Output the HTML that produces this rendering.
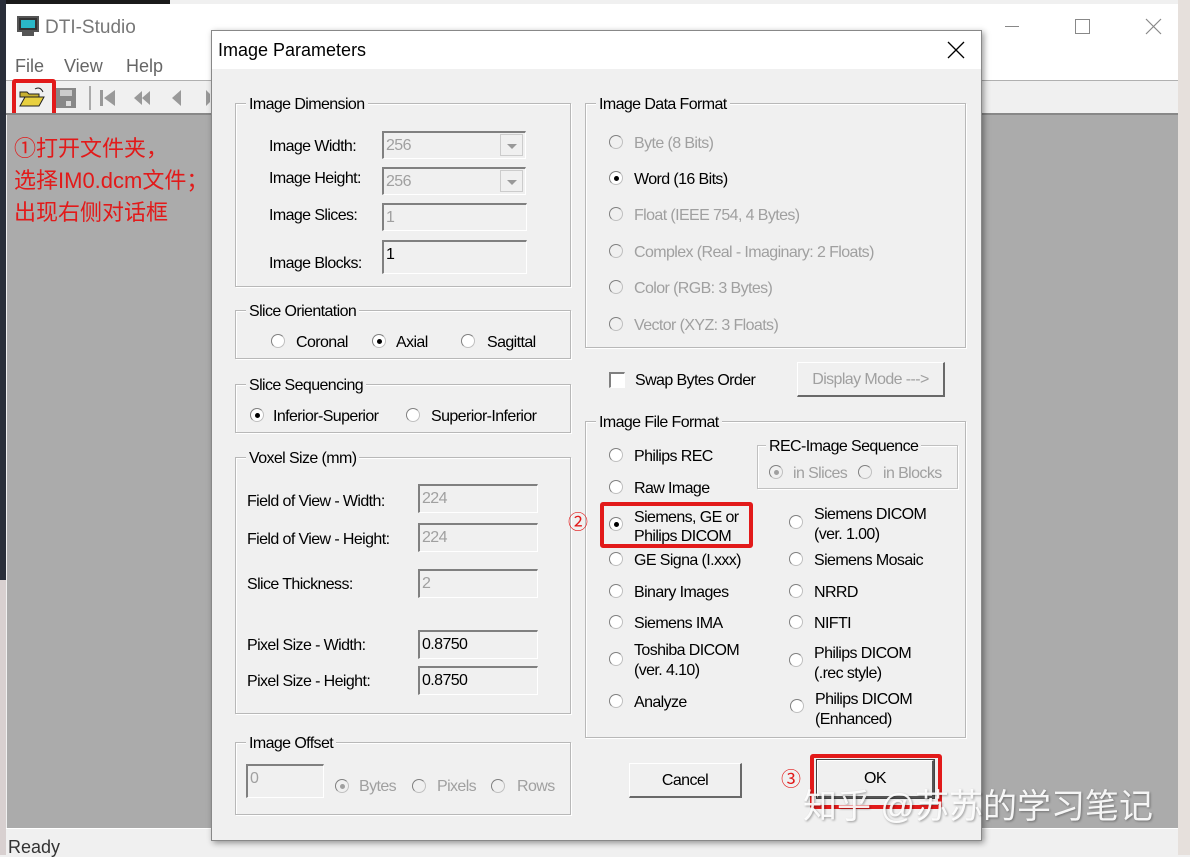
<!DOCTYPE html>
<html><head><meta charset="utf-8"><style>
*{margin:0;padding:0;box-sizing:border-box}
body{width:1190px;height:855px;overflow:hidden;position:relative;background:#f0f0f0;font-family:"Liberation Sans","Noto Sans CJK SC",sans-serif}
.a{position:absolute}
.t{position:absolute;font-size:16px;line-height:20px;white-space:nowrap;color:#000;letter-spacing:-0.6px;margin-top:2px}
.g{color:#a0a0a0}
.gb{position:absolute;border:1px solid #b8b8b8;box-shadow:1px 1px 0 #fff inset,1px 1px 0 #fff}
.gl{position:absolute;top:-9px;left:10px;background:#f0f0f0;padding:0 3px;font-size:16px;line-height:20px;letter-spacing:-0.6px;white-space:nowrap}
.r{position:absolute;width:14px;height:14px;border-radius:50%;background:#fff;border:1px solid #c0c0c0;border-top-color:#808080;border-left-color:#808080;margin-top:1px}
.r.d{background:#f0f0f0}
.r.c::after{content:"";position:absolute;left:3.5px;top:3.5px;width:5px;height:5px;border-radius:50%;background:#000}
.r.d.c::after{background:#a0a0a0}
.e{position:absolute;background:#f0f0f0;border:1px solid #fff;border-top:2px solid #808080;border-left:2px solid #808080;font-size:16px;line-height:20px;padding-left:2px;padding-top:3px;letter-spacing:-0.6px}
.btn{position:absolute;background:#f0f0f0;border:1px solid #fff;border-right:2px solid #696969;border-bottom:2px solid #696969;text-align:center;font-size:16px;letter-spacing:-0.6px}
.red{position:absolute;border:3px solid #e21a1a;border-radius:3px}
.rt{position:absolute;color:#e21a1a;font-size:22px;line-height:32px;white-space:nowrap}
</style></head><body>
<div class="a" style="left:0;top:0;width:170px;height:4px;background:#1a1a1a"></div>
<div class="a" style="left:0;top:0;width:6px;height:580px;background:#2a2f3a"></div>
<div class="a" style="left:0;top:580px;width:6px;height:275px;background:#d8d0d0"></div>
<div class="a" style="left:6px;top:4px;width:1172px;height:76px;background:#fff"></div>
<div class="a" style="left:1178px;top:0;width:12px;height:855px;background:#e6e0dc"></div>
<div class="a" style="left:17px;top:16px;width:22px;height:16px;background:#333;border:2px solid #555"><div class="a" style="left:2px;top:2px;width:14px;height:8px;background:#2ab8c8"></div></div>
<div class="a" style="left:22px;top:32px;width:12px;height:4px;background:#555"></div>
<div class="t" style="left:45px;top:16px;font-size:19px;color:#777;letter-spacing:0">DTI-Studio</div>
<div class="a" style="left:1005px;top:26px;width:14px;height:1px;background:#888"></div>
<div class="a" style="left:1075px;top:19px;width:15px;height:15px;border:1px solid #888"></div>
<svg class="a" style="left:1145px;top:18px" width="17" height="17"><path d="M1 1L16 16M16 1L1 16" stroke="#888" stroke-width="1.2"/></svg>
<div class="t" style="left:15px;top:54px;font-size:18px;color:#666;letter-spacing:0">File</div>
<div class="t" style="left:64px;top:54px;font-size:18px;color:#666;letter-spacing:0">View</div>
<div class="t" style="left:126px;top:54px;font-size:18px;color:#666;letter-spacing:0">Help</div>
<div class="a" style="left:6px;top:80px;width:1172px;height:1px;background:#b0b0b0"></div>
<div class="a" style="left:6px;top:81px;width:1172px;height:32px;background:#f0f0f0"></div>
<svg class="a" style="left:18px;top:86px" width="28" height="22"><path d="M2 6h7l2 2h10v3H2z" fill="#c8b030" stroke="#222"/><path d="M2 20l5-9h19l-5 9z" fill="#e8d040" stroke="#222"/><path d="M17 3q5-3 8 3" stroke="#222" fill="none"/></svg>
<div class="a" style="left:56px;top:88px;width:20px;height:20px;background:#888"><div class="a" style="left:4px;top:2px;width:12px;height:6px;background:#ccc"></div><div class="a" style="left:10px;top:13px;width:5px;height:5px;background:#ddd"></div></div>
<div class="a" style="left:89px;top:86px;width:2px;height:24px;background:#aaa"></div>
<svg class="a" style="left:100px;top:88px" width="110" height="20" fill="#999"><rect x="0" y="2" width="3" height="16"/><path d="M4 10l11-8v16z"/><path d="M34 10l8-7v14zM42 10l8-7v14z"/><path d="M72 10l9-8v16z"/><path d="M106 2l4 4v8l-4 4z"/></svg>
<div class="red" style="left:12px;top:79px;width:44px;height:42px;border-width:4px"></div>
<div class="a" style="left:6px;top:113px;width:1172px;height:2px;background:#888"></div>
<div class="a" style="left:7px;top:115px;width:1171px;height:713px;background:#ababab"></div>
<div class="a" style="left:6px;top:828px;width:1172px;height:27px;background:#f0f0f0;border-top:1px solid #fff"></div>
<div class="t" style="left:8px;top:835px;font-size:18px;color:#333;letter-spacing:0">Ready</div>
<div class="rt" style="left:14px;top:133px">①打开文件夹，</div>
<div class="rt" style="left:14px;top:165px">选择IM0.dcm文件；</div>
<div class="rt" style="left:14px;top:197px">出现右侧对话框</div>
<div class="a" style="left:211px;top:30px;width:771px;height:811px;background:#f0f0f0;border:1px solid #888;box-shadow:2px 2px 6px rgba(0,0,0,.4)"></div>
<div class="a" style="left:212px;top:31px;width:769px;height:38px;background:#fff"></div>
<div class="t" style="left:218px;top:38px;font-size:18px;letter-spacing:0">Image Parameters</div>
<svg class="a" style="left:947px;top:41px" width="18" height="18"><path d="M1 1L17 17M17 1L1 17" stroke="#000" stroke-width="1.3"/></svg>

<div class="gb" style="left:235px;top:103px;width:336px;height:184px"><div class="gl">Image Dimension</div></div>
<div class="t" style="left:269px;top:135px">Image Width:</div>
<div class="t" style="left:269px;top:167px">Image Height:</div>
<div class="t" style="left:269px;top:204px">Image Slices:</div>
<div class="t" style="left:269px;top:252px">Image Blocks:</div>
<div class="e g" style="left:382px;top:131px;width:144px;height:28px">256</div>
<div class="a" style="left:500px;top:134px;width:23px;height:22px;border:1px solid #ccc;background:#f0f0f0"><div class="a" style="left:6px;top:9px;border:5px solid transparent;border-top:5px solid #999;border-bottom:0"></div></div>
<div class="e g" style="left:382px;top:167px;width:144px;height:28px">256</div>
<div class="a" style="left:500px;top:170px;width:23px;height:22px;border:1px solid #ccc;background:#f0f0f0"><div class="a" style="left:6px;top:9px;border:5px solid transparent;border-top:5px solid #999;border-bottom:0"></div></div>
<div class="e g" style="left:382px;top:203px;width:145px;height:28px">1</div>
<div class="e" style="left:382px;top:240px;width:145px;height:34px">1</div>

<div class="gb" style="left:235px;top:310px;width:336px;height:49px"><div class="gl">Slice Orientation</div></div>
<div class="r" style="left:271px;top:333px"></div><div class="t" style="left:296px;top:331px">Coronal</div>
<div class="r c" style="left:372px;top:333px"></div><div class="t" style="left:396px;top:331px">Axial</div>
<div class="r" style="left:461px;top:333px"></div><div class="t" style="left:487px;top:331px">Sagittal</div>

<div class="gb" style="left:235px;top:384px;width:336px;height:49px"><div class="gl">Slice Sequencing</div></div>
<div class="r c" style="left:250px;top:407px"></div><div class="t" style="left:273px;top:405px">Inferior-Superior</div>
<div class="r" style="left:406px;top:407px"></div><div class="t" style="left:431px;top:405px">Superior-Inferior</div>

<div class="gb" style="left:235px;top:457px;width:336px;height:257px"><div class="gl">Voxel Size (mm)</div></div>
<div class="t" style="left:247px;top:490px">Field of View - Width:</div>
<div class="t" style="left:247px;top:528px">Field of View - Height:</div>
<div class="t" style="left:247px;top:573px">Slice Thickness:</div>
<div class="t" style="left:247px;top:634px">Pixel Size - Width:</div>
<div class="t" style="left:247px;top:670px">Pixel Size - Height:</div>
<div class="e g" style="left:418px;top:484px;width:120px;height:29px">224</div>
<div class="e g" style="left:418px;top:523px;width:120px;height:29px">224</div>
<div class="e g" style="left:418px;top:569px;width:120px;height:29px">2</div>
<div class="e" style="left:418px;top:630px;width:120px;height:29px">0.8750</div>
<div class="e" style="left:418px;top:666px;width:120px;height:29px">0.8750</div>

<div class="gb" style="left:235px;top:742px;width:336px;height:73px"><div class="gl">Image Offset</div></div>
<div class="e g" style="left:246px;top:764px;width:78px;height:34px">0</div>
<div class="r d c" style="left:335px;top:778px"></div><div class="t g" style="left:359px;top:775px">Bytes</div>
<div class="r d" style="left:412px;top:778px"></div><div class="t g" style="left:437px;top:775px">Pixels</div>
<div class="r d" style="left:491px;top:778px"></div><div class="t g" style="left:517px;top:775px">Rows</div>

<div class="gb" style="left:585px;top:103px;width:381px;height:245px"><div class="gl">Image Data Format</div></div>
<div class="r d" style="left:609px;top:134px"></div><div class="t g" style="left:634px;top:132px">Byte (8 Bits)</div>
<div class="r c" style="left:609px;top:170px"></div><div class="t" style="left:634px;top:168px">Word (16 Bits)</div>
<div class="r d" style="left:609px;top:206px"></div><div class="t g" style="left:634px;top:204px">Float (IEEE 754, 4 Bytes)</div>
<div class="r d" style="left:609px;top:243px"></div><div class="t g" style="left:634px;top:241px">Complex (Real - Imaginary: 2 Floats)</div>
<div class="r d" style="left:609px;top:279px"></div><div class="t g" style="left:634px;top:277px">Color (RGB: 3 Bytes)</div>
<div class="r d" style="left:609px;top:316px"></div><div class="t g" style="left:634px;top:314px">Vector (XYZ: 3 Floats)</div>

<div class="a" style="left:609px;top:372px;width:16px;height:16px;background:#fff;border:1px solid #fff;border-top:2px solid #808080;border-left:2px solid #808080"></div>
<div class="t" style="left:635px;top:369px">Swap Bytes Order</div>
<div class="btn g" style="left:797px;top:362px;width:148px;height:35px;line-height:33px">Display Mode ---&gt;</div>

<div class="gb" style="left:585px;top:421px;width:381px;height:317px"><div class="gl">Image File Format</div></div>
<div class="gb" style="left:757px;top:445px;width:201px;height:44px;border-color:#c0c0c0"><div class="gl" style="left:8px">REC-Image Sequence</div></div>
<div class="r d c" style="left:769px;top:464px"></div><div class="t g" style="left:793px;top:462px">in Slices</div>
<div class="r d" style="left:858px;top:464px"></div><div class="t g" style="left:883px;top:462px">in Blocks</div>
<div class="r" style="left:609px;top:447px"></div><div class="t" style="left:634px;top:445px">Philips REC</div>
<div class="r" style="left:609px;top:479px"></div><div class="t" style="left:634px;top:477px">Raw Image</div>
<div class="r c" style="left:609px;top:516px"></div><div class="t" style="left:634px;top:506px;line-height:19px">Siemens, GE or<br>Philips DICOM</div>
<div class="r" style="left:609px;top:551px"></div><div class="t" style="left:634px;top:549px">GE Signa (I.xxx)</div>
<div class="r" style="left:609px;top:583px"></div><div class="t" style="left:634px;top:581px">Binary Images</div>
<div class="r" style="left:609px;top:614px"></div><div class="t" style="left:634px;top:612px">Siemens IMA</div>
<div class="r" style="left:609px;top:651px"></div><div class="t" style="left:634px;top:639px;line-height:20px">Toshiba DICOM<br>(ver. 4.10)</div>
<div class="r" style="left:609px;top:693px"></div><div class="t" style="left:634px;top:691px">Analyze</div>
<div class="r" style="left:789px;top:514px"></div><div class="t" style="left:814px;top:503px;line-height:20px">Siemens DICOM<br>(ver. 1.00)</div>
<div class="r" style="left:789px;top:551px"></div><div class="t" style="left:814px;top:549px">Siemens Mosaic</div>
<div class="r" style="left:789px;top:583px"></div><div class="t" style="left:814px;top:581px">NRRD</div>
<div class="r" style="left:789px;top:614px"></div><div class="t" style="left:814px;top:612px">NIFTI</div>
<div class="r" style="left:789px;top:652px"></div><div class="t" style="left:814px;top:642px;line-height:20px">Philips DICOM<br>(.rec style)</div>
<div class="r" style="left:790px;top:698px"></div><div class="t" style="left:815px;top:688px;line-height:20px">Philips DICOM<br>(Enhanced)</div>
<div class="red" style="left:600px;top:502px;width:153px;height:46px;border-width:4px"></div>
<div class="rt" style="left:568px;top:511px;font-size:20px;line-height:24px">②</div>

<div class="btn" style="left:629px;top:763px;width:113px;height:35px;line-height:33px">Cancel</div>
<div class="btn" style="left:817px;top:760px;width:117px;height:38px;line-height:36px;border:1px solid #fff;border-right:2px solid #555;border-bottom:2px solid #555;outline:1px solid #444">OK</div>
<div class="red" style="left:810px;top:754px;width:132px;height:55px;border-width:4px"></div>
<div class="rt" style="left:781px;top:768px;font-size:20px;line-height:24px">③</div>
<div class="t" style="left:803px;top:785px;font-size:34px;line-height:40px;color:rgba(255,255,255,.92);letter-spacing:0;text-shadow:1px 1px 2px rgba(0,0,0,.35)">知乎 @苏苏的学习笔记</div>
</body></html>
